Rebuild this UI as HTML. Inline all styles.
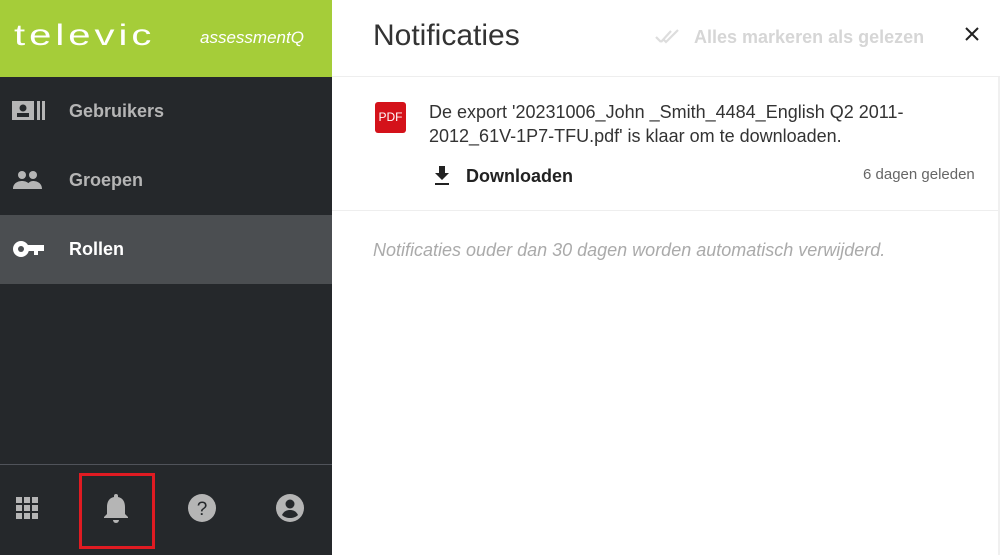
<!DOCTYPE html><html><head><style>
body{margin:0;width:1000px;height:555px;overflow:hidden;font-family:"Liberation Sans",sans-serif;background:#fff;position:relative}
.sb{position:absolute;left:0;top:0;width:332px;height:555px;background:#25282b}
.hd{height:77px;background:#a5cd39;position:relative}
.logo{position:absolute;left:14px;top:20px;color:#fff;font-size:40px;letter-spacing:4px;font-weight:300;transform:scaleY(0.75);transform-origin:top left;line-height:40px}
.aq{position:absolute;left:200px;top:28px;color:#fff;font-style:italic;font-size:17px}
.it{height:69px;position:relative;color:#b5b5b5;font-weight:bold;font-size:18px}
.it span{position:absolute;left:69px;top:24px}
.it svg{position:absolute;left:12px;top:22px}
.act{background:#4b4e51;color:#fff}
.bot{position:absolute;top:464px;left:0;width:332px;border-top:1px solid #50535a;height:91px}
.rb{position:absolute;left:79px;top:8px;width:70px;height:70px;border:3px solid #e01b22;box-sizing:content-box}
.t{position:absolute}
</style></head><body>
<div class="sb">
<div class="hd"><div class="logo">televic</div><div class="aq">assessmentQ</div></div>
<div class="it"><svg width="34" height="24" viewBox="0 0 34 24"><rect x="0" y="2" width="22" height="19" fill="#b5b5b5"/><circle cx="11" cy="9" r="3.5" fill="#25282b"/><rect x="5" y="14" width="12" height="4" fill="#25282b"/><rect x="25" y="2" width="3" height="19" fill="#b5b5b5"/><rect x="30" y="2" width="3" height="19" fill="#b5b5b5"/></svg><span>Gebruikers</span></div>
<div class="it"><svg width="32" height="24" viewBox="0 0 32 24"><circle cx="10" cy="7" r="4" fill="#b5b5b5"/><circle cx="21" cy="7" r="4" fill="#b5b5b5"/><path d="M1 21c0-6 5-8 9-8s9 2 9 8z M14 21c1-6 4-8 7-8 4 0 9 2 9 8z" fill="#b5b5b5"/></svg><span>Groepen</span></div>
<div class="it act"><svg width="34" height="24" viewBox="0 0 34 24"><circle cx="9" cy="12" r="8" fill="#fff"/><circle cx="9" cy="12" r="3" fill="#4b4e51"/><rect x="15" y="8" width="17" height="6" fill="#fff"/><rect x="22" y="12" width="4" height="6" fill="#fff"/></svg><span>Rollen</span></div>
<div class="bot">
<svg class="t" style="left:16px;top:32px" width="24" height="24"><g fill="#b5b5b5"><rect x="0" y="0" width="6" height="6"/><rect x="8" y="0" width="6" height="6"/><rect x="16" y="0" width="6" height="6"/><rect x="0" y="8" width="6" height="6"/><rect x="8" y="8" width="6" height="6"/><rect x="16" y="8" width="6" height="6"/><rect x="0" y="16" width="6" height="6"/><rect x="8" y="16" width="6" height="6"/><rect x="16" y="16" width="6" height="6"/></g></svg>
<div class="rb"></div>
<svg class="t" style="left:102px;top:28px" width="28" height="30" viewBox="0 0 28 30"><path d="M14 1a2 2 0 0 1 2 2v1c5 1 7 5 7 10v7l3 3v1H2v-1l3-3v-7c0-5 2-9 7-10V3a2 2 0 0 1 2-2z" fill="#b5b5b5"/><path d="M11 27h6a3 3 0 0 1-6 0z" fill="#b5b5b5"/></svg>
<svg class="t" style="left:187px;top:28px" width="30" height="30" viewBox="0 0 30 30"><circle cx="15" cy="15" r="14" fill="#b5b5b5"/><text x="15" y="22" text-anchor="middle" font-size="19" fill="#25282b" font-family="Liberation Sans">?</text></svg>
<svg class="t" style="left:275px;top:28px" width="30" height="30" viewBox="0 0 30 30"><circle cx="15" cy="15" r="14" fill="#b5b5b5"/><circle cx="15" cy="11" r="4.5" fill="#25282b"/><path d="M7 22c2-4 5-5 8-5s6 1 8 5c-2 2-5 3-8 3s-6-1-8-3z" fill="#25282b"/></svg>
</div>
</div>
<div class="t" style="left:332px;top:76px;width:668px;border-top:1px solid #eee"></div>
<div class="t" style="left:373px;top:19px;font-size:30px;color:#333;font-weight:300">Notificaties</div>
<svg class="t" style="left:655px;top:28px" width="26" height="18" viewBox="0 0 26 18"><path d="M1 9l5 5M6 14l10-11M9 12l2 2 12-12" stroke="#ddd" stroke-width="2.2" fill="none"/></svg>
<div class="t" style="left:694px;top:27px;font-size:18px;color:#d6d6d6;font-weight:bold">Alles markeren als gelezen</div>
<svg class="t" style="left:964px;top:26px" width="16" height="16"><path d="M2 2l12 12M14 2L2 14" stroke="#222" stroke-width="2"/></svg>
<div class="t" style="left:375px;top:102px;width:31px;height:31px;background:#d4121a;border-radius:3px;color:#fff;font-size:12px;line-height:31px;text-align:center">PDF</div>
<div class="t" style="left:429px;top:100px;font-size:18px;color:#333;line-height:24px;width:560px">De export '20231006_John _Smith_4484_English Q2 2011-<br>2012_61V-1P7-TFU.pdf' is klaar om te downloaden.</div>
<svg class="t" style="left:433px;top:166px" width="18" height="20" viewBox="0 0 18 20"><path d="M6 0h6v7h4l-7 7-7-7h4z" fill="#222"/><rect x="2" y="17" width="14" height="2" fill="#222"/></svg>
<div class="t" style="left:466px;top:166px;font-size:18px;color:#222;font-weight:bold">Downloaden</div>
<div class="t" style="left:863px;top:166px;font-size:15px;color:#666">6 dagen geleden</div>
<div class="t" style="left:332px;top:210px;width:668px;border-top:1px solid #eee"></div>
<div class="t" style="left:373px;top:240px;font-size:18px;color:#aaa;font-style:italic">Notificaties ouder dan 30 dagen worden automatisch verwijderd.</div>
<div class="t" style="left:998px;top:77px;width:2px;height:478px;background:#f0f0f0"></div>
</body></html>
